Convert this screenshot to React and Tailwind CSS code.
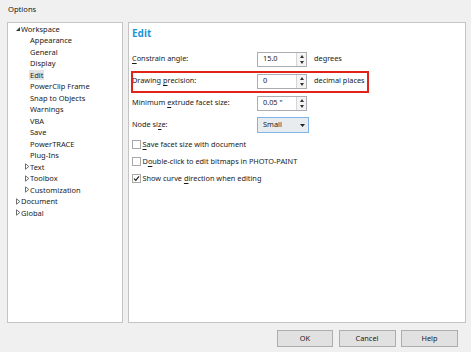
import React from "react";

const font = { fontFamily: '"Noto Sans", "Open Sans", sans-serif' };

function OpenTri() {
  return (
    <svg width="6" height="6" viewBox="0 0 6 6" className="block">
      <polygon points="5,1 5,5 1,5" fill="#3a3a3a" />
    </svg>
  );
}

function ClosedTri() {
  return (
    <svg width="6" height="7" viewBox="0 0 6 7" className="block">
      <polygon points="1.5,0.8 4.8,3.5 1.5,6.2" fill="none" stroke="#606060" strokeWidth="0.9" />
    </svg>
  );
}

const tree = [
  { label: "Workspace", level: 0, icon: "open" },
  { label: "Appearance", level: 1 },
  { label: "General", level: 1 },
  { label: "Display", level: 1 },
  { label: "Edit", level: 1, selected: true },
  { label: "PowerClip Frame", level: 1 },
  { label: "Snap to Objects", level: 1 },
  { label: "Warnings", level: 1 },
  { label: "VBA", level: 1 },
  { label: "Save", level: 1 },
  { label: "PowerTRACE", level: 1 },
  { label: "Plug-Ins", level: 1 },
  { label: "Text", level: 1, icon: "closed" },
  { label: "Toolbox", level: 1, icon: "closed" },
  { label: "Customization", level: 1, icon: "closed" },
  { label: "Document", level: 0, icon: "closed" },
  { label: "Global", level: 0, icon: "closed" },
];

function Spinner() {
  return (
    <div className="flex h-full w-[10px] flex-col items-center justify-between border-l border-[#d6d6d6] bg-[#f4f4f4] py-[2px]">
      <svg width="4" height="3" viewBox="0 0 4 3" className="block">
        <polygon points="2,0 4,3 0,3" fill="#333" />
      </svg>
      <svg width="4" height="3" viewBox="0 0 4 3" className="block">
        <polygon points="0,0 4,0 2,3" fill="#333" />
      </svg>
    </div>
  );
}

function NumInput({ value }) {
  return (
    <div className="flex h-[15px] w-[50px] items-stretch border border-[#abadb3] bg-white">
      <div className="flex flex-1 items-center pl-[5px] text-[#222]">{value}</div>
      <Spinner />
    </div>
  );
}

function U({ children }) {
  return <span className="underline decoration-[0.6px] underline-offset-[1.5px]">{children}</span>;
}

function Checkbox({ checked, children }) {
  return (
    <div className="flex h-[17px] items-center pl-[3px]">
      <div className="mr-[1.5px] flex h-[9px] w-[9px] items-center justify-center border border-[#a8a8a8] bg-white">
        {checked && (
          <svg width="7" height="7" viewBox="0 0 7 7" className="block">
            <polyline points="1,3.6 2.8,5.4 6,1.4" fill="none" stroke="#222" strokeWidth="1.2" />
          </svg>
        )}
      </div>
      <span>{children}</span>
    </div>
  );
}

export default function App() {
  return (
    <div className="h-[356px] w-[474px] bg-white" style={font}>
      <div className="flex h-[352px] w-[471px] flex-col bg-[#f0f0f0] text-[7.35px] text-[#1a1a1a]">
        <div className="flex h-[22px] items-start pl-[8px] pt-[3px] text-[7.6px] leading-[12px]">Options</div>
        <div className="flex h-[301px] gap-[5px] pl-[7px]">
          <div className="h-full w-[116px] border border-[#c4c4c4] bg-white">
            {tree.map((t) => (
              <div
                key={t.label}
                className={"flex h-[11.5px] items-center " + (t.level === 0 ? "pl-[7px]" : "pl-[16px]")}
              >
                <div className="flex w-[6px] items-center justify-center">
                  {t.icon === "open" && <OpenTri />}
                  {t.icon === "closed" && <ClosedTri />}
                </div>
                <span
                  className={
                    "text-[7.5px] leading-[10px] " + (t.selected ? "-ml-[1px] bg-[#e3e3e3] px-[1px]" : "")
                  }
                >
                  {t.label}
                </span>
              </div>
            ))}
          </div>
          <div className="h-full w-[338px] border border-[#c4c4c4] bg-white pt-[4px]">
            <div className="h-[13px] pl-[3px] text-[10px] font-bold leading-[13px] text-[#1c97d6]">Edit</div>
            <div className="mt-[8px]">
              <div className="flex h-[22px] items-center pl-[3px]">
                <span className="w-[125px]">
                  <U>C</U>onstrain angle:
                </span>
                <NumInput value="15.0" />
                <span className="ml-[7px]">degrees</span>
              </div>
              <div className="relative flex h-[22px] items-center pl-[3px]">
                <span className="w-[125px]">
                  Drawing <U>p</U>recision:
                </span>
                <NumInput value="0" />
                <span className="ml-[7px]">decimal places</span>
                <div className="pointer-events-none absolute bottom-[-0.5px] left-[2px] top-[0.5px] w-[238px] border-2 border-[#e2231a]" />
              </div>
              <div className="flex h-[22px] items-center pl-[3px]">
                <span className="w-[125px]">
                  Minimum <U>e</U>xtrude facet size:
                </span>
                <NumInput value={"0.05 \""} />
              </div>
              <div className="flex h-[22px] items-center pl-[3px]">
                <span className="w-[125px]">
                  Node si<U>z</U>e:
                </span>
                <div className="flex h-[16px] w-[52px] items-center justify-between border border-[#7eb4ea] bg-[#e8ecef] pl-[5px] pr-[3px]">
                  <span>Small</span>
                  <svg width="5" height="3" viewBox="0 0 5 3" className="block">
                    <polygon points="0,0 5,0 2.5,3" fill="#222" />
                  </svg>
                </div>
              </div>
              <Checkbox>
                <U>S</U>ave facet size with document
              </Checkbox>
              <Checkbox>
                D<U>o</U>uble-click to edit bitmaps in PHOTO-PAINT
              </Checkbox>
              <Checkbox checked>
                Show curve <U>d</U>irection when editing
              </Checkbox>
            </div>
          </div>
        </div>
        <div className="mt-[7px] flex gap-[5.5px] pl-[277px]">
          <button className="h-[17px] w-[56px] border border-[#adadad] bg-[#e1e1e1] text-[7.35px] text-[#1a1a1a]">OK</button>
          <button className="h-[17px] w-[57px] border border-[#adadad] bg-[#e1e1e1] text-[7.35px] text-[#1a1a1a]">Cancel</button>
          <button className="h-[17px] w-[57px] border border-[#adadad] bg-[#e1e1e1] text-[7.35px] text-[#1a1a1a]">Help</button>
        </div>
      </div>
    </div>
  );
}
